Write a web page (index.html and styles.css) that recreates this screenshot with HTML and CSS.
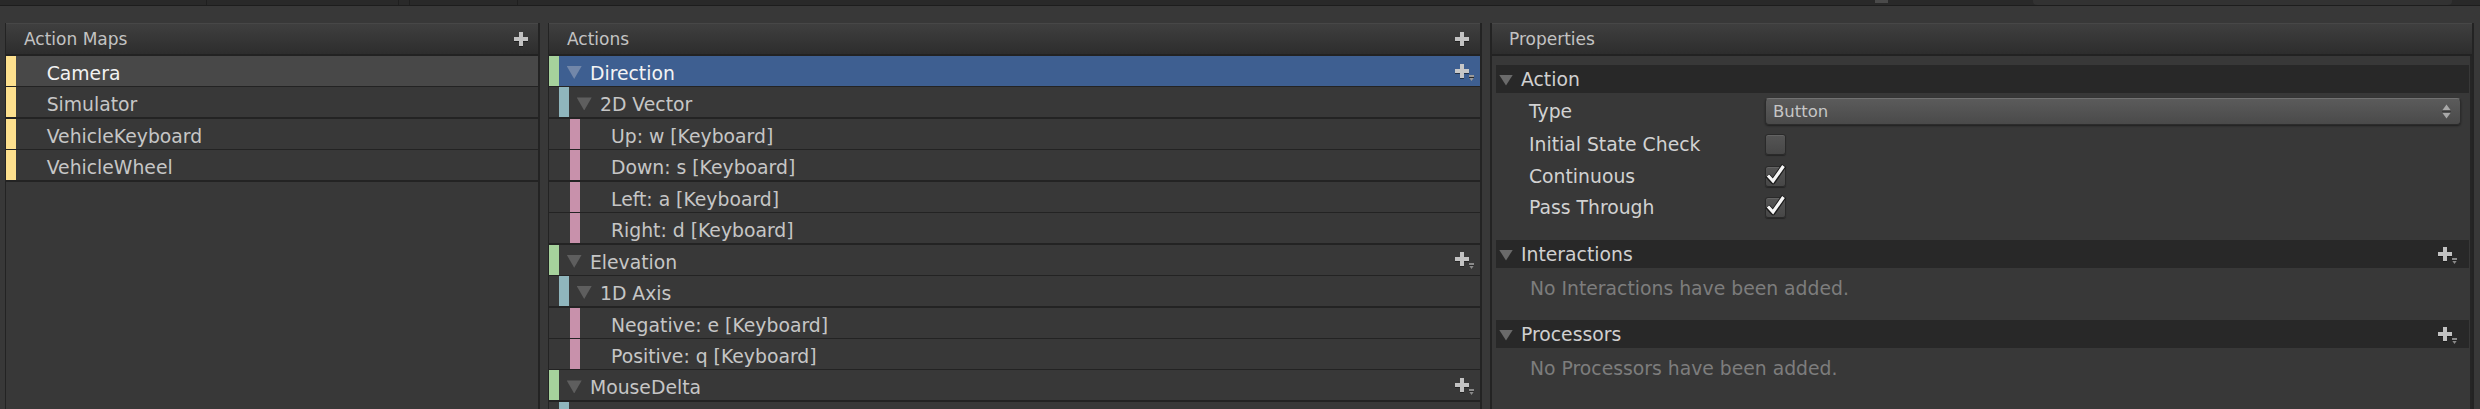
FILE: index.html
```html
<!DOCTYPE html>
<html>
<head>
<meta charset="utf-8">
<link rel="stylesheet" href="styles.css">
</head>
<body>
<div class="toolbar">
  <div class="tb-cell tb-a"></div>
  <div class="tb-cell tb-b"></div>
  <div class="tb-cell tb-c"></div>
  <div class="tb-cell tb-d"></div>
  <div class="tb-fill"></div>
  <div class="tb-chip"></div>
  <div class="tb-search"></div>
</div>
<div class="panes">
  <section class="pane pane-maps">
    <header class="pane-head">
      <span>Action Maps</span>
      <svg class="plus" width="16" height="17" viewBox="0 0 16 17"><path d="M6 2h4v5h5v4h-5v5H6v-5H1V7h5z" fill="#151515" opacity=".7"/><path d="M6 1h4v5h5v4h-5v5H6v-5H1V6h5z" fill="#c2c2c2"/></svg>
    </header>
    <div class="list">
      <div class="row sel-grey"><i class="bar yellow"></i><span class="label map-label">Camera</span></div>
      <div class="row"><i class="bar yellow"></i><span class="label map-label">Simulator</span></div>
      <div class="row"><i class="bar yellow"></i><span class="label map-label">VehicleKeyboard</span></div>
      <div class="row"><i class="bar yellow"></i><span class="label map-label">VehicleWheel</span></div>
    </div>
  </section>

  <section class="pane pane-actions">
    <header class="pane-head">
      <span>Actions</span>
      <svg class="plus" width="16" height="17" viewBox="0 0 16 17"><path d="M6 2h4v5h5v4h-5v5H6v-5H1V7h5z" fill="#151515" opacity=".7"/><path d="M6 1h4v5h5v4h-5v5H6v-5H1V6h5z" fill="#c2c2c2"/></svg>
    </header>
    <div class="list">
      <div class="row sel-blue"><i class="bar green"></i><i class="tri"></i><span class="label">Direction</span>
        <svg class="plus-dd" width="21" height="19" viewBox="0 0 21 19"><path d="M6 2h4v5h5v4h-5v5H6v-5H1V7h5z" fill="#151515" opacity=".6"/><path d="M6 1h4v5h5v4h-5v5H6v-5H1V6h5z" fill="#c8c8c8"/><path d="M15 12h5v2.5l-2.5 3.5-2.5-3.5z" fill="#9a9a9a"/><path d="M15 14.5h5" stroke="#2a2a2a" stroke-width="1"/></svg>
      </div>
      <div class="row in1"><i class="bar teal"></i><i class="tri"></i><span class="label">2D Vector</span></div>
      <div class="row in2"><i class="bar pink"></i><span class="label part">Up: w [Keyboard]</span></div>
      <div class="row in2"><i class="bar pink"></i><span class="label part">Down: s [Keyboard]</span></div>
      <div class="row in2"><i class="bar pink"></i><span class="label part">Left: a [Keyboard]</span></div>
      <div class="row in2"><i class="bar pink"></i><span class="label part">Right: d [Keyboard]</span></div>
      <div class="row"><i class="bar green"></i><i class="tri"></i><span class="label">Elevation</span>
        <svg class="plus-dd" width="21" height="19" viewBox="0 0 21 19"><path d="M6 2h4v5h5v4h-5v5H6v-5H1V7h5z" fill="#151515" opacity=".6"/><path d="M6 1h4v5h5v4h-5v5H6v-5H1V6h5z" fill="#c2c2c2"/><path d="M15 12h5v2.5l-2.5 3.5-2.5-3.5z" fill="#8a8a8a"/><path d="M15 14.5h5" stroke="#2a2a2a" stroke-width="1"/></svg>
      </div>
      <div class="row in1"><i class="bar teal"></i><i class="tri"></i><span class="label">1D Axis</span></div>
      <div class="row in2"><i class="bar pink"></i><span class="label part">Negative: e [Keyboard]</span></div>
      <div class="row in2"><i class="bar pink"></i><span class="label part">Positive: q [Keyboard]</span></div>
      <div class="row"><i class="bar green"></i><i class="tri"></i><span class="label">MouseDelta</span>
        <svg class="plus-dd" width="21" height="19" viewBox="0 0 21 19"><path d="M6 2h4v5h5v4h-5v5H6v-5H1V7h5z" fill="#151515" opacity=".6"/><path d="M6 1h4v5h5v4h-5v5H6v-5H1V6h5z" fill="#c2c2c2"/><path d="M15 12h5v2.5l-2.5 3.5-2.5-3.5z" fill="#8a8a8a"/><path d="M15 14.5h5" stroke="#2a2a2a" stroke-width="1"/></svg>
      </div>
      <div class="row in1"><i class="bar teal"></i></div>
    </div>
  </section>

  <section class="pane pane-props">
    <header class="pane-head">
      <span>Properties</span>
    </header>
    <div class="props-body">
      <div class="section"><i class="sec-tri"></i><span class="sec-title">Action</span></div>
      <div class="fields">
        <div class="field field-type">
          <span class="field-label">Type</span>
          <div class="dropdown"><span>Button</span>
            <svg class="updown" width="9" height="15" viewBox="0 0 9 15"><path d="M4.5 0.5L8.5 6H0.5z" fill="#a8a8a8"/><path d="M0.5 9H8.5L4.5 14.5z" fill="#a8a8a8"/><path d="M0 7.5h9" stroke="#3a3a3a"/></svg>
          </div>
        </div>
        <div class="field">
          <span class="field-label">Initial State Check</span>
          <div class="check"></div>
        </div>
        <div class="field">
          <span class="field-label">Continuous</span>
          <div class="check"><svg width="24" height="24" viewBox="0 0 24 24"><path d="M3.5 12.5l5.5 6 11-16" fill="none" stroke="#1a1a1a" stroke-width="5.5" stroke-linejoin="round"/><path d="M4 12.5l5 5.5 10.5-15" fill="none" stroke="#f6f6f6" stroke-width="3.2"/></svg></div>
        </div>
        <div class="field">
          <span class="field-label">Pass Through</span>
          <div class="check"><svg width="24" height="24" viewBox="0 0 24 24"><path d="M3.5 12.5l5.5 6 11-16" fill="none" stroke="#1a1a1a" stroke-width="5.5" stroke-linejoin="round"/><path d="M4 12.5l5 5.5 10.5-15" fill="none" stroke="#f6f6f6" stroke-width="3.2"/></svg></div>
        </div>
      </div>
      <div class="section section-gap"><i class="sec-tri"></i><span class="sec-title">Interactions</span>
        <svg class="plus-dd sec-plus" width="21" height="19" viewBox="0 0 21 19"><path d="M6 2h4v5h5v4h-5v5H6v-5H1V7h5z" fill="#111" opacity=".6"/><path d="M6 1h4v5h5v4h-5v5H6v-5H1V6h5z" fill="#c2c2c2"/><path d="M15 12h5v2.5l-2.5 3.5-2.5-3.5z" fill="#8a8a8a"/><path d="M15 14.5h5" stroke="#222" stroke-width="1"/></svg>
      </div>
      <div class="empty">No Interactions have been added.</div>
      <div class="section"><i class="sec-tri"></i><span class="sec-title">Processors</span>
        <svg class="plus-dd sec-plus" width="21" height="19" viewBox="0 0 21 19"><path d="M6 2h4v5h5v4h-5v5H6v-5H1V7h5z" fill="#111" opacity=".6"/><path d="M6 1h4v5h5v4h-5v5H6v-5H1V6h5z" fill="#c2c2c2"/><path d="M15 12h5v2.5l-2.5 3.5-2.5-3.5z" fill="#8a8a8a"/><path d="M15 14.5h5" stroke="#222" stroke-width="1"/></svg>
      </div>
      <div class="empty">No Processors have been added.</div>
    </div>
  </section>
</div>
</body>
</html>
```

FILE: styles.css
```css
* { box-sizing: border-box; }
html, body { margin: 0; padding: 0; }
body {
  width: 2480px;
  height: 409px;
  overflow: hidden;
  background: #383838;
  font-family: "DejaVu Sans", "Verdana", sans-serif;
  color: #c4c4c4;
}

/* top toolbar strip */
.toolbar {
  height: 6px;
  display: flex;
  background: #292929;
  border-bottom: 1px solid #1d1d1d;
}
.tb-cell { height: 100%; border-right: 1px solid #1f1f1f; flex: none; }
.tb-a { width: 207px; }
.tb-b { width: 192px; }
.tb-c { width: 11px; }
.tb-d { width: 108px; }
.tb-fill { flex: 1; }
.tb-chip { width: 13px; height: 3px; background: #4a4a4a; margin-right: 145px; flex: none; }
.tb-search { width: 419px; height: 5px; background: #323232; border-radius: 0 0 4px 4px; margin-right: 28px; flex: none; }

/* panes */
.panes {
  display: flex;
  gap: 8px;
  padding: 17px 0 0 5px;
  height: 403px;
  overflow: hidden;
}
.pane {
  flex: none;
  height: 100%;
  overflow: hidden;
  display: flex;
  flex-direction: column;
  background: #383838;
  border-left: 1px solid #232323;
  border-right: 2px solid #232323;
}
.pane-maps { width: 535px; }
.pane-actions { width: 934px; }
.pane-props { width: 984px; border-left-width: 2px; }

.pane-head {
  flex: none;
  height: 33px;
  border-top: 1px solid #474747;
  border-bottom: 2px solid #222222;
  background: linear-gradient(#3f3f3f, #2d2d2d);
  display: flex;
  align-items: center;
  justify-content: space-between;
  padding: 0 9px 0 18px;
  font-size: 17px;
  line-height: 29px;
  color: #c3c3c3;
}
.pane-props .pane-head { padding-left: 17px; }
.pane-actions .pane-head { padding-right: 10px; }
.plus { display: block; margin-top: 1px; }

/* lists */
.list { background: #232323; flex: none; }
.row {
  height: 30px;
  margin-bottom: 1.45px;
  background: #383838;
  display: flex;
  align-items: center;
  font-size: 18.8px;
  color: #c6c6c6;
}
.row.in1 { padding-left: 10px; }
.row.in2 { padding-left: 21px; }
.bar { display: block; width: 10px; height: 100%; flex: none; }
.yellow { background: #fde08e; }
.green { background: #a6d29c; }
.teal { background: #8fb6bd; }
.pink { background: #c891ab; }

.label {
  line-height: 25px;
  padding-top: 5px;
  height: 30px;
  white-space: nowrap;
  margin-left: 8.3px;
}
.map-label { margin-left: 30.7px; }
.label.part { margin-left: 31px; }

.tri {
  display: block;
  flex: none;
  width: 15px;
  height: 13px;
  margin: 3px 0 0 7.7px;
  background: #5e5e5e;
  clip-path: polygon(0 0, 100% 0, 50% 100%);
}

.sel-grey { background: #484848; }
.sel-grey .label { color: #f2f2f2; }
.sel-blue { background: #3e5f91; }
.sel-blue .label { color: #f4f4f4; }
.sel-blue .tri { background: #7287a9; }

.plus-dd { display: block; flex: none; margin: 2px 5px 0 auto; }

/* properties */
.props-body {
  flex: 1;
  padding: 9px 1px 0 4px;
  border-right: 2px solid #252525;
}
.section {
  height: 28px;
  background: #282828;
  display: flex;
  align-items: center;
  padding-left: 3px;
  font-size: 18.8px;
  color: #d0d0d0;
}
.sec-tri {
  display: block;
  flex: none;
  width: 14px;
  height: 11px;
  margin-top: 2px;
  background: #6a6a6a;
  clip-path: polygon(0 0, 100% 0, 50% 100%);
}
.sec-title {
  margin-left: 8px;
  line-height: 26px;
  padding-top: 2px;
  height: 28px;
}
.sec-plus { margin-right: 11px; }
.section-gap { margin-top: 16.5px; }

.fields { padding-top: 3px; }
.field {
  height: 31.5px;
  display: flex;
  align-items: center;
  padding-left: 33px;
  font-size: 18.8px;
  color: #d2d2d2;
}
.field-type { height: 33px; align-items: flex-start; }
.field-label {
  width: 236px;
  flex: none;
  line-height: 25px;
  padding-top: 3px;
  height: 31px;
  white-space: nowrap;
}
.dropdown {
  flex: 1;
  height: 27px;
  margin: 2px 8px 0 0;
  border-radius: 4px;
  background: linear-gradient(#5b5b5b, #4a4a4a);
  border: 1px solid #2c2c2c;
  border-top-color: #727272;
  box-shadow: 0 1px 2px rgba(0, 0, 0, 0.45);
  display: flex;
  align-items: center;
  justify-content: space-between;
  padding: 0 9px 0 7px;
  font-size: 16.5px;
  color: #c6c6c6;
}
.updown { display: block; }
.check {
  width: 21px;
  height: 21px;
  flex: none;
  border-radius: 3px;
  background: linear-gradient(#555555, #474747);
  border: 1px solid #2a2a2a;
  box-shadow: inset 0 1px 0 #636363, 0 1px 1px rgba(0,0,0,0.35);
  display: flex;
  align-items: center;
  justify-content: center;
  overflow: visible;
}
.check svg { display: block; flex: none; margin-top: -3px; }
.empty {
  height: 52px;
  padding: 8px 0 0 34px;
  line-height: 25px;
  font-size: 18.8px;
  color: #7d7d7d;
  white-space: nowrap;
}
```
